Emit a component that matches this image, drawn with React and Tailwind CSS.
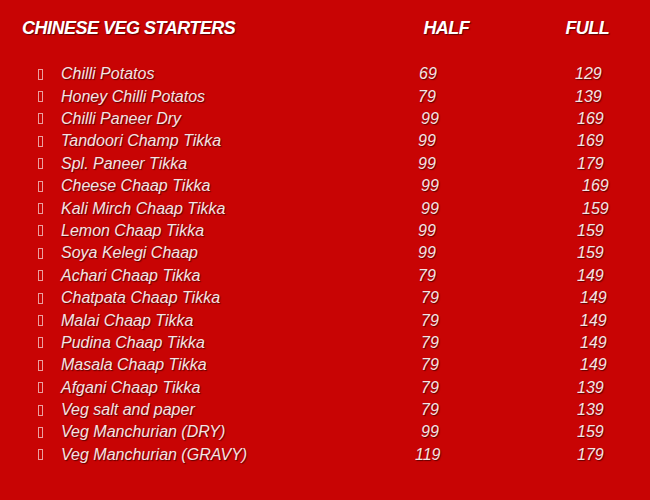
const items = [
  { name: "Chilli Potatos", half: "69", full: "129", hp: "pl-[4px]", fp: "pl-[0px]" },
  { name: "Honey Chilli Potatos", half: "79", full: "139", hp: "pl-[3px]", fp: "pl-[0px]" },
  { name: "Chilli Paneer Dry", half: "99", full: "169", hp: "pl-[6px]", fp: "pl-[2px]" },
  { name: "Tandoori Champ Tikka", half: "99", full: "169", hp: "pl-[3px]", fp: "pl-[2px]" },
  { name: "Spl. Paneer Tikka", half: "99", full: "179", hp: "pl-[3px]", fp: "pl-[2px]" },
  { name: "Cheese Chaap Tikka", half: "99", full: "169", hp: "pl-[6px]", fp: "pl-[7px]" },
  { name: "Kali Mirch Chaap Tikka", half: "99", full: "159", hp: "pl-[6px]", fp: "pl-[7px]" },
  { name: "Lemon Chaap Tikka", half: "99", full: "159", hp: "pl-[3px]", fp: "pl-[2px]" },
  { name: "Soya Kelegi Chaap", half: "99", full: "159", hp: "pl-[3px]", fp: "pl-[2px]" },
  { name: "Achari Chaap Tikka", half: "79", full: "149", hp: "pl-[3px]", fp: "pl-[2px]" },
  { name: "Chatpata Chaap Tikka", half: "79", full: "149", hp: "pl-[6px]", fp: "pl-[5px]" },
  { name: "Malai Chaap Tikka", half: "79", full: "149", hp: "pl-[6px]", fp: "pl-[5px]" },
  { name: "Pudina Chaap Tikka", half: "79", full: "149", hp: "pl-[6px]", fp: "pl-[5px]" },
  { name: "Masala Chaap Tikka", half: "79", full: "149", hp: "pl-[6px]", fp: "pl-[5px]" },
  { name: "Afgani Chaap Tikka", half: "79", full: "139", hp: "pl-[6px]", fp: "pl-[2px]" },
  { name: "Veg salt and paper", half: "79", full: "139", hp: "pl-[6px]", fp: "pl-[2px]" },
  { name: "Veg Manchurian (DRY)", half: "99", full: "159", hp: "pl-[6px]", fp: "pl-[2px]" },
  { name: "Veg Manchurian (GRAVY)", half: "119", full: "179", hp: "pl-[0px]", fp: "pl-[2px]" },
];

const shadow = "[text-shadow:1px_1px_1px_rgba(60,0,0,0.75)]";

export default function App() {
  return (
    <div className={`h-[500px] w-[650px] overflow-hidden bg-[#c80404] font-['Liberation_Sans',Arial,sans-serif] italic text-[#f5e4e4] ${shadow}`}>
      <div className="flex h-[56px] items-center pt-[1px] text-[18px] font-bold tracking-[-0.5px] text-white">
        <div className="pl-[22px]">CHINESE VEG STARTERS</div>
        <div className="pl-[188px]">HALF</div>
        <div className="pl-[96px]">FULL</div>
      </div>
      <div className="pt-[7px]">
        {items.map((item) => (
          <div key={item.name} className="flex h-[22.4px] items-center text-[16px]">
            <div className="flex w-[61px] justify-start pl-[38px]">
              <span className="h-[11px] w-[5px] border border-[#f3c7c7] opacity-80" />
            </div>
            <div className="w-[354px]">{item.name}</div>
            <div className={`w-[160px] ${item.hp}`}>{item.half}</div>
            <div className={item.fp}>{item.full}</div>
          </div>
        ))}
      </div>
    </div>
  );
}
